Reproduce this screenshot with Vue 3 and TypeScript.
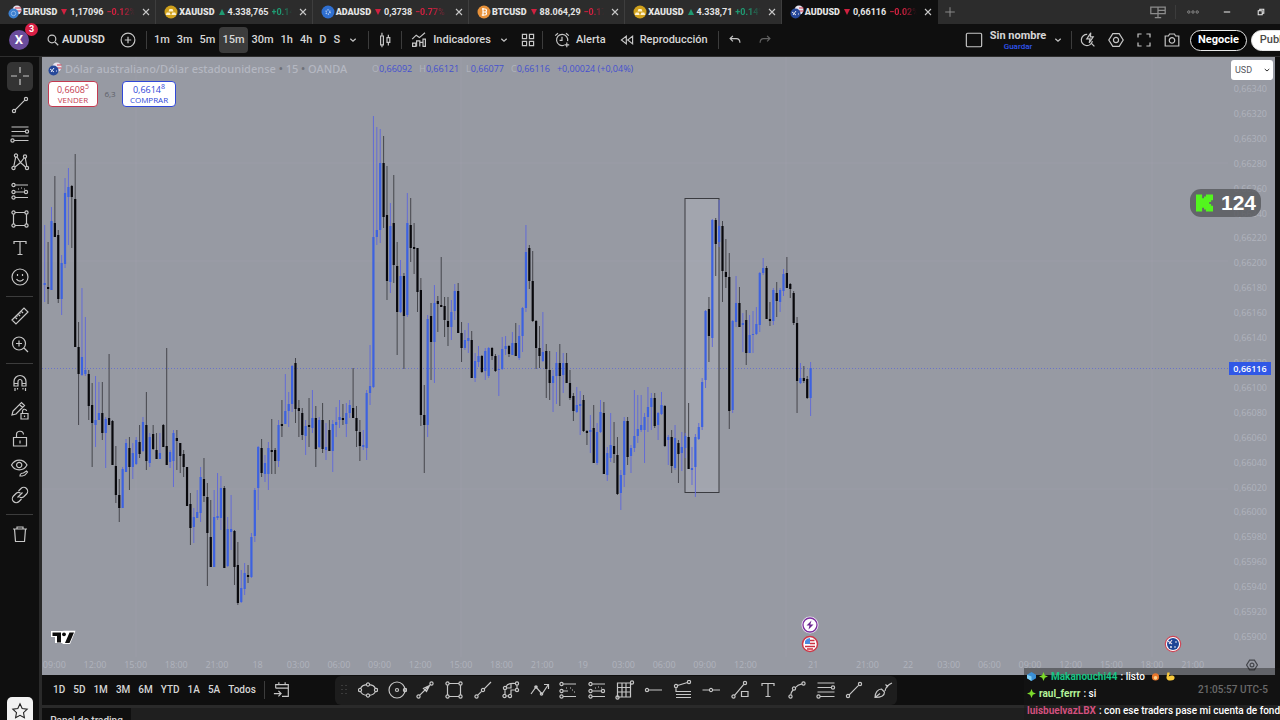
<script setup lang="ts">
interface Tab { symbol: string; price: string; change: string; up: boolean; coin: string }
interface Candle { x: number; high: number; low: number; top: number; bottom: number; kind: string }

const tabs: Tab[] = [
  { symbol: 'EURUSD', price: '1,17096', change: '−0.12%', up: false, coin: 'pair' },
  { symbol: 'XAUUSD', price: '4.338,765', change: '+0.14%', up: true, coin: 'gold' },
  { symbol: 'ADAUSD', price: '0,3738', change: '−0.77% A', up: false, coin: 'ada' },
  { symbol: 'BTCUSD', price: '88.064,29', change: '−0.17%', up: false, coin: 'btc' },
  { symbol: 'XAUUSD', price: '4.338,71', change: '+0.14%', up: true, coin: 'gold' },
  { symbol: 'AUDUSD', price: '0,66116', change: '−0.02%', up: false, coin: 'aud' },
]
const activeTab = 5

const intervals = ['1m', '3m', '5m', '15m', '30m', '1h', '4h', 'D', 'S']
const ranges = ['1D', '5D', '1M', '3M', '6M', 'YTD', '1A', '5A', 'Todos']

const ring = (x: number, y: number, r = 1.6): string =>
  `M${x - r} ${y}a${r} ${r} 0 1 0 ${2 * r} 0a${r} ${r} 0 1 0 ${-2 * r} 0`

const icons: Record<string, string> = {
  cross: 'M10 1v6M10 13v6M1 10h6M13 10h6',
  trend: ring(4, 16) + ring(16, 4) + 'M5.2 14.8L14.8 5.2',
  fib: 'M1.500 3h17M1.500 7.500h14M1.500 12h17M4 16.500h14.500' + ring(17, 7.5) + ring(2.5, 16.5),
  pattern: ring(6, 3.5) + ring(15, 4.5) + ring(3.5, 16) + ring(17, 16) + 'M5.700 5L3.800 14.500M7 5l3.500 5.500L14 6M15.300 6l1.500 8.500M5 15l5.500-4.500 5 4.500',
  forecast: ring(3.5, 4) + ring(3.5, 11) + ring(16, 11) + ring(3.5, 16.5) + 'M5 4h13M5 11h9M5 16.500h13M8 8h1M11 7h1M14 8h1',
  rect: ring(3.5, 3.5) + ring(16.5, 3.5) + ring(3.5, 16.5) + ring(16.5, 16.5) + 'M5 3.500h10M5 16.500h10M3.500 5v10M16.500 5v10',
  text: 'M4 6V3.500h12V6M10 3.500v13M7.500 16.500h5',
  smile: ring(10, 10, 8) + 'M7.500 7v2M12.500 7v2M6.500 12c1.500 2.700 5.500 2.700 7 0',
  ruler: 'M2 14L14 2l4 4L6 18zM5 11l2 2M8 8l2 2M11 5l2 2M6.500 9.500l1 1M9.500 6.500l1 1',
  zoomIn: ring(9, 9.5, 6.5) + 'M14 14l4 4M9 6.500v6M6 9.500h6',
  magnet: 'M4 13V8.500a6 6 0 0 1 12 0V13h-4V8.500a2 2 0 0 0-4 0V13zM4 10.500h4M12 10.500h4M5 15v3M7.500 15v1.500M13 15v1.500M15.500 15v3',
  pencilLock: 'M2 14l1-4 8.500-8.500 3 3L6 13zM9.500 3.500l3 3M11 12.500h7v5.500h-7zM12.500 12.500v-2a2 2 0 0 1 4-.5M14.500 14.500v1.500',
  lock: 'M3.500 8.500h13v8.500h-13zM6.500 8.500V6a3.500 3.500 0 0 1 7-.5M10 11.500v3',
  eye: 'M1.500 8C5 1.500 13.500 1.500 17 8 13.500 14.500 5 14.500 1.500 8z' + ring(9.2, 8, 2.6) + 'M10 19c0-2 1.500-3 3.500-3l3-2 1 1-2 2.500c-1 1.500-3 1.500-5.500 1.500z',
  link: 'M8.500 6l2.500-2.500a3.800 3.800 0 0 1 5.500 5.500L14 11.500a3.800 3.800 0 0 1-4.500.5M11.500 14L9 16.500A3.800 3.800 0 0 1 3.500 11L6 8.500A3.800 3.800 0 0 1 10.500 8M7.500 12.500l5-5',
  trash: 'M3 5h14M7 5V3h6v2M4.500 5l1 12.500h9L15.500 5',
  star: 'M10 2l2.400 5.200 5.600.7-4.100 3.900 1 5.700-4.900-2.700-4.900 2.700 1-5.700L2 7.900l5.600-.7z',
  search: ring(8.5, 8.5, 5.5) + 'M12.500 12.500l5 5',
  plusCircle: ring(10, 10, 8.6) + 'M10 6v8M6 10h8',
  chevron: 'M5.500 8l4.500 4 4.500-4',
  candles: 'M4.500 5h3.500v11H4.500zM6.200 1v4M6.200 16v3M12.500 7h3.500v6H12.500zM14.200 3.500V7M14.200 13v4',
  indicators: 'M1.500 9l5-5 4 3 7-6M2 18v-4h4v4zM7 18v-7h4v7M11 18v-5h4v5M15 18V9h3v9z',
  layoutGrid: 'M2 2h6v6H2zM12 2h6v6h-6zM2 12h6v6H2zM12 12h6v6h-6z',
  alarm: 'M12.500 16.500A7 7 0 1 1 17 11.500M10 6v4.500H7M1.500 4.500L5 1.500M15 1.500l3.500 3M16 13v6M13 16h6',
  rewind: 'M9 4.500v11L2 10zM18 4.500v11L11 10z',
  undo: 'M7 4L3 8l4 4M3 8h9c3.500 0 5 2 5 6',
  redo: 'M13 4l4 4-4 4M17 8H8c-3.500 0-5 2-5 6',
  square: 'M3 2.500h14a1.500 1.500 0 0 1 1.500 1.500v12a1.500 1.500 0 0 1-1.500 1.500H3A1.500 1.500 0 0 1 1.500 16V4A1.500 1.500 0 0 1 3 2.500z',
  quick: 'M9 3a7 7 0 1 0 6.500 8.500M14 14l4 4M13.500 1L8.500 8.500h4l-1 5 5-7.500h-3.500z',
  hexagon: 'M6 2h8l5 8-5 8H6l-5-8z' + ring(10, 10, 3.2),
  fullscreen: 'M2.500 7V2.500H7M13 2.500h4.500V7M17.500 13v4.500H13M7 17.500H2.500V13',
  camera: 'M1.500 5h4L7 2.500h6L14.500 5h4v12.500h-17z' + ring(10, 10.5, 3.4),
  ellipse: ring(10, 4.5) + ring(10, 15.5) + ring(2, 10) + ring(18, 10) + 'M8.500 4.700C5.500 5 3.400 6.500 2.600 8.600M11.500 4.700c3 .3 5.100 1.800 5.900 3.900M8.500 15.300c-3-.3-5.100-1.800-5.900-3.900M11.500 15.300c3-.3 5.100-1.800 5.900-3.900',
  circle: ring(10, 10, 8) + ring(10, 10, 1.5) + ring(18, 10),
  arrow: ring(3.5, 16.500) + ring(16.5, 3.5) + 'M4.800 15.200L15 5M14.500 5.500L8.500 8.500l3 3z',
  ray: ring(3.5, 16.5) + ring(10, 10) + 'M4.800 15.200L8.800 11.200M11.200 8.800L18 2',
  brushPath: ring(4, 8) + ring(3.5, 16) + ring(16, 3.5) + ring(16, 10) + ring(9, 16) + 'M4 14.500V9.500M5 7c1-3 4-4 9.500-3.500M16 5v3.500M14.500 10H10v4.500M5.500 8H10V4M5 16h2.500',
  zigzag: 'M1 14l5-7 6 7 6-9M14 4.500h4.500V9' + ring(6, 7, 1.2) + ring(11.5, 14, 1.2),
  longPos: ring(3.5, 4) + ring(3.5, 11) + ring(3.5, 16.5) + 'M5 4h13M5 11h5M5 16.500h13M12 8h1M14 10h1M16 12h1M8 8h1',
  grid: 'M2.500 3h13v14h-13zM7 3v14M11 3v14M2.500 7.500h13M2.500 12h13' + ring(17, 2.5) + ring(2.5, 17.5),
  hray: ring(3, 10) + 'M4.600 10H18',
  channel: ring(3, 6) + ring(16, 2) + 'M4.500 5.500L14.500 2.500M3 8v3.500h15M3 14.500h15M3 17.500h15',
  hline: ring(10, 10) + 'M1.500 10h7M11.500 10H19',
  pathBox: ring(3.5, 16.5) + ring(15, 3) + 'M4.600 15.300L14 4.200M11.500 11.500h6.500v5h-6.500z',
  curve: ring(3.5, 16.5) + ring(7, 8.5) + ring(16.5, 3.5) + 'M3.800 15c.2-2 .8-3.500 2.200-5M8.500 7.500C10 5.500 12 4.500 15 3.800',
  brush: 'M2 17.500c0-5 3-8.500 6.500-8.500l3 3c0 3.500-4 5.500-9.500 5.500zM2 17.500l5-4M12 11c.5-3 2.500-6 7-8M12.500 4.500l2.500 2.500',
  calendar: 'M3 8V4h14v13h-7M3 8h14M6.500 1.500V4M13.500 1.500V4M1 14h8M6 11l3 3-3 3',
  monitor: 'M1 4h18v8H1zM10 4v13M10 8h9M6 17h8',
}

const drawGroups: string[][] = [
  ['cross', 'trend', 'fib', 'pattern', 'forecast', 'rect', 'text', 'smile'],
  ['ruler', 'zoomIn'],
  ['magnet', 'pencilLock', 'lock', 'eye', 'link'],
  ['trash'],
]
const favourites = ['ellipse', 'circle', 'arrow', 'rect', 'ray', 'brushPath', 'zigzag', 'longPos', 'forecast', 'grid',
  'hray', 'channel', 'hline', 'pathBox', 'text', 'curve', 'fib', 'trend', 'brush']

const prices = Array.from({ length: 23 }, (_, i) => `0,${66340 - i * 20}`)

const hours: [number, string][] = [
  [0, '09:00'], [3, '12:00'], [6, '15:00'], [9, '18:00'], [12, '21:00'], [15, '18'], [18, '03:00'], [21, '06:00'],
  [24, '09:00'], [27, '12:00'], [30, '15:00'], [33, '18:00'], [36, '21:00'], [39, '19'], [42, '03:00'], [45, '06:00'],
  [48, '09:00'], [51, '12:00'], [56, '21'], [60, '21:00'], [63, '22'], [66, '03:00'], [69, '06:00'],
  [72, '09:00'], [75, '12:00'], [78, '15:00'], [81, '18:00'], [84, '21:00'],
]

/* high, low, body top, body bottom, b = rising / k = falling */
const series = `225 302 283 285 b;242 304 287 289 k;207 290 221 290 b;176 237 223 237 k;230 303 235 299 k;255 315 263 299 b;178 268 193 264 b;168 245 187 197 b;185 248 186 197 k;154 347 199 347 k;
322 425 347 374 k;288 376 357 375 b;317 376 370 374 b;370 420 374 406 k;383 467 405 423 k;376 447 420 425 b;382 420 413 420 b;382 440 413 433 k;417 468 419 433 b;354 425 418 425 k;
420 465 421 465 k;446 503 466 495 k;479 522 495 508 k;467 508 469 508 b;439 472 443 472 b;437 490 448 467 k;443 479 453 467 b;437 465 440 464 b;425 458 442 454 k;417 452 422 451 b;
392 470 425 461 k;433 467 437 463 b;425 450 434 449 k;433 459 450 459 k;433 459 453 459 b;424 447 425 447 k;348 465 446 465 k;450 468 452 462 b;430 487 433 461 b;430 470 438 441 k;
443 473 443 456 k;450 477 454 467 k;467 506 467 506 k;493 545 504 528 k;508 543 517 527 b;490 518 512 518 b;467 522 477 513 b;458 502 479 496 k;483 586 497 533 k;500 567 537 567 k;
490 567 517 567 b;473 520 516 518 b;476 530 488 518 b;486 568 488 568 k;517 567 529 566 b;495 550 529 532 b;530 585 531 567 k;542 605 565 603 k;570 603 588 602 b;563 595 573 589 b;
565 583 575 577 k;533 578 537 577 b;488 542 490 536 b;446 510 447 488 b;439 477 448 473 k;455 482 463 474 b;442 490 448 474 b;419 474 450 452 k;448 474 450 461 k;420 467 425 461 b;
400 437 424 426 k;374 423 411 424 b;392 427 404 411 b;365 412 366 404 b;358 423 363 409 k;400 437 408 411 k;408 440 413 435 k;420 455 426 436 b;398 447 425 427 k;390 433 418 428 b;
406 467 418 449 k;417 448 420 447 b;403 453 420 449 k;423 460 447 450 b;420 451 430 451 k;420 472 424 451 b;407 437 422 425 b;400 428 417 420 b;404 425 418 420 k;403 437 413 424 b;
400 418 405 413 b;368 418 408 418 k;406 447 418 431 k;420 461 432 446 k;430 450 445 447 b;390 460 393 448 b;345 405 386 393 b;116 388 237 387 b;127 245 230 237 b;129 243 163 230 b;
136 228 163 217 k;166 300 215 281 k;203 293 226 282 b;175 283 223 265 k;242 355 266 312 k;260 313 276 312 b;273 369 276 316 k;193 317 223 315 b;198 262 225 248 k;223 274 247 249 k;
248 312 248 292 k;278 426 290 415 k;385 473 415 425 k;315 437 319 425 b;303 380 316 342 k;285 383 303 342 b;296 332 301 304 k;257 307 305 307 k;297 337 306 320 k;297 346 321 327 k;
300 340 312 327 b;284 320 291 311 b;283 333 291 333 k;322 362 333 348 k;330 350 340 348 b;323 353 338 341 b;331 378 340 378 k;353 382 361 378 b;346 367 356 362 b;355 373 356 372 k;
348 380 351 371 b;347 378 348 376 b;347 360 348 356 k;354 372 356 371 k;355 396 369 370 b;337 370 349 369 b;336 355 346 349 b;345 357 346 354 k;332 353 343 355 b;323 356 343 356 k;
325 360 336 358 b;307 352 308 336 b;225 312 252 308 b;245 289 248 281 k;251 322 281 321 k;320 369 321 348 k;326 368 348 356 k;312 362 352 361 b;344 398 351 369 k;351 400 370 383 k;
370 412 376 383 b;352 404 363 376 b;344 406 363 376 k;353 393 363 375 b;353 383 363 383 k;370 400 383 398 k;393 421 396 411 k;387 413 405 412 b;391 435 404 406 b;395 432 400 431 k;
430 445 431 433 k;415 453 430 432 b;405 463 428 463 k;423 465 432 463 b;400 433 412 432 b;402 474 413 474 k;447 481 453 475 b;413 462 445 458 b;422 463 446 454 k;437 495 455 494 k;
470 510 475 493 b;417 487 421 475 b;417 465 421 457 k;445 473 448 456 b;390 452 436 448 b;395 443 429 436 b;395 432 425 430 b;413 463 417 430 b;387 432 407 417 b;393 430 398 407 b;
393 428 398 426 k;412 440 413 425 b;392 415 405 414 b;405 447 406 446 k;435 465 437 440 b;430 473 437 466 k;425 470 438 468 b;440 483 443 454 k;432 471 447 453 b;433 458 436 448 b;
403 469 437 469 k;447 485 468 470 b;434 497 437 467 b;423 440 427 439 b;378 430 382 427 b;310 388 311 380 b;297 362 309 336 k;219 347 220 338 b;218 276 220 244 k;200 247 226 242 b;
221 302 226 271 k;239 288 272 277 k;253 429 277 411 k;320 413 321 410 b;276 327 303 322 b;287 327 303 327 k;313 352 323 325 b;310 365 320 353 k;315 353 335 353 b;311 353 334 335 b;
307 335 324 334 b;272 332 273 325 b;258 275 268 273 b;266 319 268 319 k;302 326 319 321 k;288 325 290 321 b;282 317 293 301 k;288 312 290 302 b;269 296 274 291 b;257 288 273 288 k;
283 298 284 289 k;291 325 293 323 k;317 413 323 381 k;363 384 378 383 b;366 383 378 381 k;376 399 379 398 k;362 416 368 398 b`

const plotTop = 57
const candles: Candle[] = series.split(';').map((row, i) => {
  const [high, low, top, bottom, kind] = row.trim().split(' ')
  return {
    x: 2.7 + i * 3.389,
    high: +high - plotTop,
    low: +low - plotTop,
    top: +top - plotTop,
    bottom: +bottom - plotTop,
    kind,
  }
})
</script>

<template>
  <div class="app">
    <header class="tabs">
      <div class="tablist" role="tablist">
        <div v-for="(t, i) in tabs" :key="i" class="tab" :class="{ active: i === activeTab }" role="tab">
          <svg class="coin" viewBox="0 0 14 14" aria-hidden="true">
            <g v-if="t.coin === 'pair'">
              <circle cx="9" cy="5" r="4.500" fill="#e9e4ee" /><path d="M7 3h6M8 6h5.500" stroke="#d0374b" />
              <circle cx="5.500" cy="8.500" r="5" fill="#3b7fd0" /><circle cx="5.500" cy="8.500" r="2.200" fill="none" stroke="#8fb6e8" />
            </g>
            <g v-else-if="t.coin === 'aud'">
              <circle cx="9" cy="5" r="4.500" fill="#e9e4ee" /><path d="M9 3h4.500M9 6h4.500" stroke="#d0374b" />
              <circle cx="5.500" cy="8.500" r="5" fill="#26489a" /><path d="M2 7l4 3M6 6l-3 4M8 9h1" stroke="#e8e8f4" />
            </g>
            <g v-else-if="t.coin === 'gold'">
              <circle cx="7" cy="7" r="6.500" fill="#cfa01c" /><path d="M5.500 4h3l1 2.500h-5zM2.700 7.500h3l1 2.500h-5zM8.300 7.500h3l1 2.500h-5z" fill="#fff3cf" />
            </g>
            <g v-else-if="t.coin === 'ada'">
              <circle cx="7" cy="7" r="6.500" fill="#2f6fd0" /><circle cx="7" cy="7" r="2" fill="none" stroke="#bcd4f5" stroke-width="1.500" stroke-dasharray="1 1" />
            </g>
            <g v-else>
              <circle cx="7" cy="7" r="6.500" fill="#e8923a" /><path d="M5 4h3a1.500 1.500 0 0 1 0 3H5.500M8 7a1.500 1.500 0 0 1 0 3H4.700M6 3v8" fill="none" stroke="#fff" stroke-width="1.200" />
            </g>
          </svg>
          <b class="sym">{{ t.symbol }}</b>
          <i class="dir" :class="t.up ? 'up' : 'down'"></i>
          <span class="price">{{ t.price }}</span>
          <span class="chg" :class="t.up ? 'up' : 'down'">{{ t.change }}</span>
          <button class="x" aria-label="Cerrar"><svg viewBox="0 0 10 10"><path d="M2 2l6 6M8 2L2 8" /></svg></button>
        </div>
      </div>
      <button class="win" aria-label="Nueva pestaña"><svg class="dimIcon" viewBox="0 0 20 20"><path d="M10 2v16M2 10h16" /></svg></button>
      <span class="grow"></span>
      <button class="win wide" aria-label="Pantallas"><svg class="dimIcon big" viewBox="0 0 20 20"><path :d="icons.monitor" /></svg></button>
      <span class="bar short"></span>
      <button class="win wide" aria-label="Más"><svg class="dimIcon" viewBox="0 0 20 20"><path :d="ring(3, 10, 2) + ring(10, 10, 2) + ring(17, 10, 2)" /></svg></button>
      <button class="win wide" aria-label="Minimizar"><svg class="lit" viewBox="0 0 10 10"><path d="M1 5h8" /></svg></button>
      <button class="win wide" aria-label="Restaurar"><svg class="lit" viewBox="0 0 10 10"><path d="M1.500 3.500h5v5h-5zM3.500 3V1.500h5v5H7" /></svg></button>
    </header>

    <nav class="toolbar">
      <span class="avatar">X<em>3</em></span>
      <button class="tool search"><svg class="ic s14" viewBox="0 0 20 20"><path :d="icons.search" /></svg><b>AUDUSD</b></button>
      <button class="tool add" aria-label="Comparar"><svg class="ic s16" viewBox="0 0 20 20"><path :d="icons.plusCircle" /></svg></button>
      <span class="bar"></span>
      <div class="intervals">
        <button v-for="v in intervals" :key="v" class="tool" :class="{ on: v === '15m' }">{{ v }}</button>
        <button class="tool" aria-label="Más intervalos"><svg class="ic s12" viewBox="0 0 20 20"><path :d="icons.chevron" /></svg></button>
      </div>
      <span class="bar"></span>
      <button class="tool slot" aria-label="Velas"><svg class="ic s16" viewBox="0 0 20 20"><path :d="icons.candles" /></svg></button>
      <span class="bar"></span>
      <button class="tool indicators"><svg class="ic s16" viewBox="0 0 20 20"><path :d="icons.indicators" /></svg>Indicadores</button>
      <button class="tool narrow" aria-label="Favoritos"><svg class="ic s12" viewBox="0 0 20 20"><path :d="icons.chevron" /></svg></button>
      <button class="tool slot" aria-label="Plantillas"><svg class="ic s14" viewBox="0 0 20 20"><path :d="icons.layoutGrid" /></svg></button>
      <span class="bar"></span>
      <button class="tool alert"><svg class="ic s16" viewBox="0 0 20 20"><path :d="icons.alarm" /></svg>Alerta</button>
      <button class="tool replay"><svg class="ic s14" viewBox="0 0 20 20"><path :d="icons.rewind" /></svg>Reproducción</button>
      <span class="bar"></span>
      <button class="tool slot" aria-label="Deshacer"><svg class="ic s14" viewBox="0 0 20 20"><path :d="icons.undo" /></svg></button>
      <button class="tool slot off" aria-label="Rehacer"><svg class="ic s14" viewBox="0 0 20 20"><path :d="icons.redo" /></svg></button>
      <span class="grow"></span>
      <div class="right">
        <button class="tool slot" aria-label="Diseño"><svg class="ic s18" viewBox="0 0 20 20"><path :d="icons.square" /></svg></button>
        <button class="tool name"><b>Sin nombre</b><small>Guardar</small></button>
        <button class="tool narrow" aria-label="Gestionar diseños"><svg class="ic s12" viewBox="0 0 20 20"><path :d="icons.chevron" /></svg></button>
        <span class="bar"></span>
        <button v-for="n in ['quick', 'hexagon', 'fullscreen', 'camera']" :key="n" class="tool slot" :aria-label="n">
          <svg class="ic s16" viewBox="0 0 20 20"><path :d="icons[n]" /></svg>
        </button>
        <button class="pill">Negocie</button>
        <button class="pill white">Publicar</button>
      </div>
    </nav>

    <main class="body">
      <aside class="side">
        <div v-for="(g, gi) in drawGroups" :key="gi" class="group">
          <button v-for="(n, ni) in g" :key="n" class="draw" :class="{ on: gi === 0 && ni === 0 }" :aria-label="n">
            <svg class="ic s20" viewBox="0 0 20 20"><path :d="icons[n]" /></svg>
          </button>
        </div>
        <span class="grow"></span>
        <button class="fav" aria-label="Favoritos"><svg viewBox="0 0 20 20"><path :d="icons.star" /></svg></button>
      </aside>

      <section class="work">
        <div class="chart">
          <svg class="plot" viewBox="0 0 1233 618" preserveAspectRatio="none" aria-label="AUDUSD">
            <path class="gridline" d="M0 106H1186M0 204H1186M0 432H1186M94 0V600M419 0V600M744 0V600M1110 0V600" />
            <line class="last" x1="0" y1="311.500" x2="1187" y2="311.500" />
            <rect class="zone" x="643" y="141.500" width="34" height="294" />
            <g v-for="(c, i) in candles" :key="i" :class="c.kind">
              <line :x1="c.x" :x2="c.x" :y1="c.high" :y2="c.low" />
              <rect :x="c.x - 1.1" :y="c.top" width="2.200" :height="c.bottom - c.top" />
            </g>
          </svg>

          <div class="overlay">
            <div class="legend">
              <svg class="coin" viewBox="0 0 14 14" aria-hidden="true">
                <circle cx="9" cy="5" r="4.500" fill="#e9e4ee" /><path d="M9 3h4.500M9 6h4.500" stroke="#d0374b" />
                <circle cx="5.500" cy="8.500" r="5" fill="#26489a" /><path d="M2 7l4 3M6 6l-3 4M8 9h1" stroke="#e8e8f4" />
              </svg>
              <span class="title">Dólar australiano/Dólar estadounidense <i>•</i> 15 <i>•</i> OANDA</span>
              <span class="ohlc"><s>O</s>0,66092</span>
              <span class="ohlc"><s>H</s>0,66121</span>
              <span class="ohlc"><s>L</s>0,66077</span>
              <span class="ohlc"><s>C</s>0,66116</span>
              <span class="ohlc">+0,00024 (+0,04%)</span>
            </div>
            <div class="quotes">
              <button class="sell"><span>0,6608<sup>5</sup></span>VENDER</button>
              <span class="spread">6,3</span>
              <button class="buy"><span>0,6614<sup>8</sup></span>COMPRAR</button>
            </div>
          </div>

          <svg class="tv" viewBox="0 0 26 15" aria-label="TradingView">
            <path d="M1 1h11l2.500-.3H25.500L20 14H12.500V13H5V7H1z" fill="#fff" />
            <path d="M2.500 2.500h8.500v10H7V6H2.500z M19.500 2.500h4.500l-4.500 10.500H15z" fill="#0b0b0b" /><circle cx="14" cy="4.300" r="1.900" fill="#0b0b0b" />
          </svg>

          <div class="scale">
            <label class="currency">
              <select aria-label="Divisa"><option>USD</option></select>
              <svg viewBox="0 0 20 20"><path :d="icons.chevron" /></svg>
            </label>
            <div class="prices"><span v-for="p in prices" :key="p">{{ p }}</span></div>
            <b class="now">0,66116</b>
          </div>

          <div class="times">
            <span v-for="[slot, label] in hours" :key="slot" :style="{ gridColumn: `${slot + 1} / span 3` }">{{ label }}</span>
          </div>
          <svg class="axisgear" viewBox="0 0 20 20"><path :d="icons.hexagon" /></svg>

          <div class="pins today">
            <svg viewBox="0 0 18 18"><circle cx="9" cy="9" r="8.500" fill="#efe6f5" /><circle cx="9" cy="9" r="7" fill="#fff" stroke="#7b2f9e" stroke-width="1.300" /><path d="M10.500 4.500l-5 5h3l-1 4 5-5H9.300z" fill="#6b2590" /></svg>
            <svg viewBox="0 0 18 18"><circle cx="9" cy="9" r="7.500" fill="#fff" stroke="#cc3848" stroke-width="1.500" /><path d="M4 9V6a6 6 0 0 1 5-3v6z" fill="#4a8be0" /><path d="M9 5.500h4.500M9 8.500h5M4 11.500h10M6 14h6" stroke="#cc3040" stroke-width="1.500" /></svg>
          </div>
          <div class="pins next">
            <svg viewBox="0 0 18 18"><circle cx="9" cy="9" r="7.700" fill="#fff" stroke="#cc4858" stroke-width="1.200" /><circle cx="9" cy="9" r="6" fill="#1f4596" /><path d="M4 6l4 3M8 5L5 9" stroke="#f0dfe6" stroke-width="1.100" /><circle cx="12" cy="7" r=".8" fill="#fff" /><circle cx="11" cy="12" r=".8" fill="#fff" /><circle cx="7" cy="12" r=".9" fill="#fff" /></svg>
          </div>

          <div class="viewers">
            <svg viewBox="0 0 18 18" aria-label="Kick"><path d="M0 0h6.500v4h2V2h2V0H18v6h-2v2h-2v2h2v2h2v6h-7.500v-2h-2v-2h-2v4H0z" fill="#53f51e" /></svg>
            <b>124</b>
          </div>
        </div>

        <footer class="ranges">
          <div class="rangelist">
            <button v-for="r in ranges" :key="r">{{ r }}</button>
          </div>
          <span class="bar"></span>
          <button class="goto" aria-label="Ir a"><svg class="ic s18" viewBox="0 0 20 20"><path :d="icons.calendar" /></svg></button>
          <div class="dock">
            <svg class="handle" viewBox="0 0 6 12"><path d="M1 1v1M5 1v1M1 5v1M5 5v1M1 9v1M5 9v1" /></svg>
            <button v-for="n in favourites" :key="n" class="dockbtn" :aria-label="n">
              <svg class="ic s20" viewBox="0 0 20 20"><path :d="icons[n]" /></svg>
            </button>
          </div>
          <span class="grow"></span>
          <span class="clock">21:05:57 UTC-5</span>
        </footer>
        <div class="panelbar"><button>Panel de trading</button></div>
      </section>
    </main>

    <div class="chat">
      <p>
        <svg viewBox="0 0 10 10"><path d="M5 0l5 3v4L5 10 0 7V3z" fill="#3b8fd6" /><path d="M0 3l5 2v5L0 7z" fill="#7fd0f5" /></svg>
        <svg viewBox="0 0 10 10"><path d="M5 0l1.500 3.500L10 5 6.500 6.500 5 10 3.500 6.500 0 5l3.500-1.500z" fill="#7ddc2c" /></svg>
        <b class="c1">Makanouchi44</b> : listo
        <svg class="emo" viewBox="0 0 10 10"><circle cx="5" cy="5.500" r="4" fill="#e8762c" /><circle cx="5" cy="6.500" r="2" fill="#ffd08a" /></svg>
        <svg class="emo" viewBox="0 0 10 10"><path d="M1.500 0.500h2.500v2L3 5C5 3.500 8 3 9.500 5.500 10 8 8 9.500 5 9.500S.5 8 .5 6z" fill="#f8c93c" /></svg>
      </p>
      <p>
        <svg viewBox="0 0 10 10"><path d="M5 0l1.500 3.500L10 5 6.500 6.500 5 10 3.500 6.500 0 5l3.500-1.500z" fill="#7ddc2c" /></svg>
        <b class="c2">raul_ferrr</b> : si
      </p>
      <p><b class="c3">luisbuelvazLBX</b> : con ese traders pase mi cuenta de fondeo</p>
    </div>
  </div>
</template>

<style>
html, body { background: #0f0f0f; overflow: hidden; }
</style>

<style scoped>
.app { position: relative; display: flex; flex-direction: column; height: 100vh; overflow: hidden; background: #0f0f0f; color: #d6d6d6; font: 500 11px/14px Roboto, "Open Sans", sans-serif; }
* { box-sizing: border-box; }
button { font: inherit; color: inherit; background: none; border: 0; padding: 0; margin: 0; cursor: pointer; }
svg { display: block; flex: none; fill: none; }
.grow { flex: 1; }
.ic { fill: none; stroke: #c6c6c6; stroke-width: 1.3; }
.s12 { width: 12px; height: 12px; stroke-width: 2; }
.s14 { width: 14px; height: 14px; stroke-width: 1.7; }
.s16 { width: 16px; height: 16px; stroke-width: 1.5; }
.s18 { width: 18px; height: 18px; }
.s20 { width: 20px; height: 20px; stroke-width: 1.2; }

.tabs { display: flex; align-items: center; flex: none; height: 24px; background: #2c2c2c; padding-right: 2px; }
.tablist { display: flex; width: 938px; height: 24px; }
.tab { position: relative; display: flex; align-items: center; flex: 1; min-width: 0; padding: 0 4px 0 8px; border-right: 1px solid #3e3e3e; color: #e4e4e4; font-weight: 700; }
.tab.active { background: #0f0f0f; border-color: #0f0f0f; }
.coin { width: 14px; height: 14px; margin-right: 1px; }
.sym, .price, .chg { font-size: 9px; }
.dir { width: 0; height: 0; margin: 0 3px 0 4px; border: 3px solid transparent; }
.dir.up { border-bottom: 6px solid #1f9a72; border-top: 0; }
.dir.down { border-top: 6px solid #d0213f; border-bottom: 0; }
.chg { flex: 1; width: 0; margin: 0 6px 0 3px; overflow: hidden; white-space: nowrap; mask-image: linear-gradient(90deg, #000 50%, transparent 100%); }
.chg.up { color: #1f9a72; }
.chg.down { color: #d0213f; }
.x svg { width: 10px; height: 10px; stroke: #c8c8c8; stroke-width: 1.1; }
.win { display: flex; justify-content: center; width: 24px; }
.win.wide { width: 34px; }
.win svg { width: 12px; height: 12px; }
.win svg.dimIcon { stroke: #8c8c8c; stroke-width: 1.6; }
.win svg.big { width: 16px; height: 16px; }
.win svg.lit { width: 8px; height: 8px; stroke: #e8e8e8; stroke-width: 1.3; }

.toolbar { display: flex; align-items: center; flex: none; height: 33px; border-bottom: 1px solid #2e2e2e; padding-left: 9px; }
.avatar { position: relative; display: flex; align-items: center; justify-content: center; width: 20px; height: 20px; border-radius: 50%; background: #6a4c9c; color: #fff; font-size: 13px; font-weight: 700; }
.avatar em { position: absolute; top: -7px; right: -9px; width: 13px; height: 13px; border-radius: 50%; background: #d81f45; font: 700 9px/13px Roboto, sans-serif; text-align: center; }
.tool { display: flex; align-items: center; justify-content: center; height: 26px; border-radius: 4px; white-space: nowrap; flex: none; }
.search { gap: 2px; margin-left: 17px; }
.add { margin: 0 10px 0 15px; }
.bar { flex: none; width: 1px; height: 18px; background: #3c3c3c; }
.bar.short { height: 14px; }
.intervals { display: flex; gap: 1px; padding: 0 6px 0 4px; }
.intervals .tool { padding: 0 3px; }
.tool.on { background: #3c3c3c; }
.slot { width: 28px; }
.bar + .slot { margin: 0 2px; }
.narrow { width: 20px; }
.indicators { gap: 6px; padding: 0 3px 0 9px; }
.alert { gap: 6px; padding: 0 8px 0 11px; }
.replay { gap: 6px; padding: 0 10px 0 6px; }
.off { opacity: .45; }
.right { display: flex; align-items: center; width: 320px; }
.right .slot { margin: 0; }
.name { flex-direction: column; width: 60px; line-height: 13px; }
.name small { color: #2f55f0; font-size: 8px; font-weight: 500; line-height: 9px; }
.right .bar { margin: 0 2px 0 3px; }
.pill { flex: none; height: 21px; width: 57px; margin-left: 4px; border: 1px solid #e8e8e8; border-radius: 11px; background: #000; color: #fff; font-weight: 700; }
.pill.white { background: #fff; color: #4a4a4a; width: 58px; font-weight: 500; }

.body { display: flex; flex: 1; min-height: 0; }
.side { display: flex; flex-direction: column; align-items: center; flex: none; width: 42px; padding-top: 5px; border-right: 3px solid #2a2a2a; }
.group { display: flex; flex-direction: column; align-items: center; width: 27px; }
.group + .group { margin-top: 5px; padding-top: 5px; border-top: 1px solid #3c3c3c; }
.draw { display: flex; align-items: center; justify-content: center; width: 26px; height: 28px; border-radius: 5px; }
.group:first-child { height: 229px; }
.group:first-child .draw { flex: 1; }
.draw.on { background: #343434; }
.fav { display: flex; flex: none; align-items: center; justify-content: center; width: 26px; height: 28px; margin-bottom: -5px; border-radius: 5px; background: #f2f2f2; }
.fav svg { width: 18px; height: 18px; stroke: #222; stroke-width: 1.2; }

.work { display: flex; flex-direction: column; flex: 1; min-width: 0; }
.chart { position: relative; flex: 1; min-height: 0; margin-right: 5px; background: #979aa3; }
.plot { position: absolute; inset: 0; width: 100%; height: 100%; }
.gridline { stroke: rgba(180, 184, 196, .12); }
.last { stroke: #5563d8; stroke-dasharray: 1 2; opacity: .7; }
.zone { fill: rgba(190, 193, 202, .3); stroke: #3a3b40; }
.b line { stroke: #636cd6; stroke-width: 1; }
.b rect { fill: #3d62e0; }
.k line { stroke: #45464c; stroke-width: 1; }
.k rect { fill: #08080c; }
.overlay { position: relative; display: inline-flex; flex-direction: column; gap: 5px; padding: 5px 0 0 6px; }
.legend { display: flex; align-items: center; height: 14px; white-space: nowrap; }
.title { width: 307px; margin-left: 2px; color: #b4b7c1; font: 500 11px/14px "Noto Sans", sans-serif; }
.title i { color: #6d7079; font-style: normal; }
.ohlc { margin-right: 7px; color: #4450cf; font: 400 9px/14px "Open Sans", sans-serif; }
.ohlc s { color: #b0b3bd; text-decoration: none; }
.quotes { display: flex; align-items: center; }
.sell, .buy { display: flex; flex-direction: column; align-items: center; justify-content: center; width: 50px; height: 26px; border: 1px solid #c43a50; border-radius: 4px; background: #fff; color: #c43a50; font: 400 8px/10px "Open Sans", sans-serif; }
.sell span, .buy span { font-size: 9px; line-height: 11px; }
.sell sup, .buy sup { font-size: 7px; line-height: 1px; }
.buy { width: 54px; border-color: #3048d8; color: #3048d8; }
.spread { width: 24px; text-align: center; color: #5c5f68; font: 400 8px/12px "Open Sans", sans-serif; }
.tv { position: absolute; left: 8px; bottom: 30px; width: 26px; height: 15px; }
.scale { position: absolute; top: 0; right: 0; bottom: 0; width: 46px; }
.currency { position: absolute; top: 3px; right: 2px; width: 42px; height: 20px; }
.currency select { appearance: none; width: 42px; height: 20px; padding: 0 0 0 4px; border: 0; border-radius: 3px; background: #fff; color: #55575e; font: 400 9px/20px Roboto, sans-serif; }
.currency svg { position: absolute; top: 5px; right: 1px; width: 10px; height: 10px; stroke: #333; stroke-width: 2; }
.prices { display: flex; flex-direction: column; justify-content: space-between; height: 100%; padding: 26px 8px 32px 0; text-align: right; color: #b0b3bd; font: 400 9px/12px "Open Sans", sans-serif; }
.now { position: absolute; top: 305px; right: 4px; width: 42px; height: 13px; background: #3058e6; color: #fff; font: 600 9px/13px "Open Sans", sans-serif; text-align: center; }
.times { position: absolute; left: -8px; right: 62px; bottom: 4px; display: grid; grid-template-columns: repeat(87, minmax(0, 1fr)); color: #b0b3bd; font: 400 9px/12px "Open Sans", sans-serif; }
.times span { display: flex; justify-content: center; grid-row: 1; }
.axisgear { position: absolute; right: 17px; bottom: 4px; width: 12px; height: 12px; stroke: #44464c; stroke-width: 2; }
.pins { position: absolute; bottom: 22px; display: flex; flex-direction: column; gap: 1px; transform: translateX(-50%); }
.pins svg { width: 18px; height: 18px; }
.today { left: 62.3%; }
.next { left: 91.7%; }
.viewers { position: absolute; top: 132px; right: 14px; display: flex; align-items: center; gap: 8px; height: 28px; padding: 0 5px 0 6px; border-radius: 11px; background: rgba(88, 89, 94, .82); color: #fff; font: 700 21px/28px "Liberation Sans", Arial, sans-serif; }
.viewers svg { width: 17px; height: 18px; }

.ranges { display: flex; align-items: center; flex: none; height: 31px; border-bottom: 1px solid #2a2a2a; font-size: 10px; }
.rangelist { display: flex; gap: 8px; width: 222px; padding-left: 11px; white-space: nowrap; }
.goto { margin: 0 44px 0 8px; }
.dock { display: flex; align-items: center; width: 562px; height: 29px; padding-left: 6px; border-radius: 6px; background: #1d1d1d; }
.handle { width: 6px; height: 12px; margin-right: 7px; stroke: #5a5a5a; }
.dockbtn { display: flex; justify-content: center; flex: 1; }
.clock { margin-right: 12px; color: #a4a4a4; font-size: 10px; }
.panelbar { flex: none; height: 14px; overflow: hidden; border-top: 2px solid #2a2a2a; background: #1f1f1f; }
.panelbar button { display: block; width: 89px; height: 26px; background: #0f0f0f; font-size: 10px; line-height: 26px; white-space: nowrap; }

.chat { position: absolute; left: calc(100% - 256px); right: 0; bottom: 0; height: 52px; overflow: hidden; background: rgba(24, 24, 24, .42); color: #fff; font: 500 10px/17px Roboto, sans-serif; }
.chat p { display: flex; align-items: center; gap: 3px; margin: 0; padding-left: 3px; white-space: nowrap; }
.chat svg { width: 9px; height: 9px; }
.chat .emo { margin-left: 3px; }
.c1 { color: #19c586; }
.c2 { color: #b5f29a; }
.c3 { color: #d2507e; }
</style>
